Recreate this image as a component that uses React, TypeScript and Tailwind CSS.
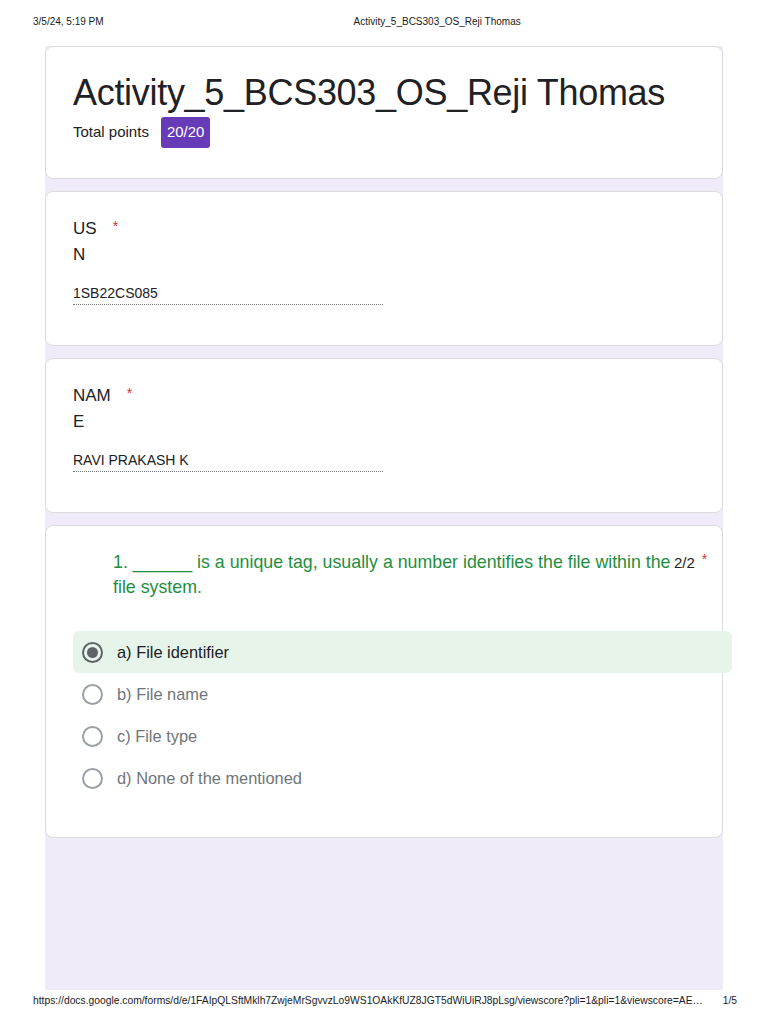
import React from 'react';

const options = [
  { label: 'a) File identifier', selected: true },
  { label: 'b) File name', selected: false },
  { label: 'c) File type', selected: false },
  { label: 'd) None of the mentioned', selected: false },
];

function Radio({ selected }: { selected: boolean }) {
  return (
    <span
      className={
        'flex h-[21px] w-[21px] shrink-0 items-center justify-center rounded-full border-2 ' +
        (selected ? 'border-[#5f6368]' : 'border-[#9aa0a6]')
      }
    >
      {selected && <span className="h-[11px] w-[11px] rounded-full bg-[#5f6368]" />}
    </span>
  );
}

function FieldCard({ first, second, value }: { first: string; second: string; value: string }) {
  return (
    <div className="h-[155px] rounded-lg border border-[#dadce0] bg-white px-[27px] pt-[24px]">
      <div className="flex items-start text-[17px] leading-[26px] text-[#202124]">
        <div>
          <div>{first}</div>
          <div>{second}</div>
        </div>
        <span className="ml-[16px] text-[14px] leading-[20px] text-[#d93025]">*</span>
      </div>
      <div className="mt-[15px] w-[310px] border-b border-dotted border-[#70757a] pb-[1px] text-[14px] leading-[20px] text-[#202124]">
        {value}
      </div>
    </div>
  );
}

export default function App() {
  return (
    <div className="flex min-h-[1024px] flex-col bg-white font-['Liberation_Sans',Arial,sans-serif]">
      <div className="flex h-[46px] items-start pt-[16px] text-[10px] leading-[12px] text-[#202124]">
        <span className="ml-[33px]">3/5/24, 5:19 PM</span>
        <span className="ml-[250px]">Activity_5_BCS303_OS_Reji Thomas</span>
      </div>

      <div className="mx-[45px] flex h-[944px] w-[678px] flex-col gap-[12px] bg-[#f0ebf8]">
        <div className="h-[133px] rounded-lg border border-[#dadce0] bg-white px-[27px] pt-[24px]">
          <h1 className="text-[36px] leading-[44px] tracking-[-0.3px] text-[#202124]">
            Activity_5_BCS303_OS_Reji Thomas
          </h1>
          <div className="mt-[2px] flex items-center text-[15px] text-[#202124]">
            <span>Total points</span>
            <span className="ml-[12px] flex h-[31px] items-center rounded-[3px] bg-[#673ab7] px-[6px] text-white">
              20/20
            </span>
          </div>
        </div>

        <FieldCard first="US" second="N" value="1SB22CS085" />
        <FieldCard first="NAM" second="E" value="RAVI PRAKASH K" />

        <div className="h-[313px] rounded-lg border border-[#dadce0] bg-white pt-[24px]">
          <div className="flex items-start pl-[67px]">
            <p className="w-[561px] text-[17.8px] leading-[25px] text-[#1e8e3e]">
              1. ______ is a unique tag, usually a number identifies the file within the file system.
            </p>
            <span className="mt-[3px] text-[15px] leading-[20px] text-[#202124]">2/2</span>
            <span className="ml-[7px] text-[14px] leading-[18px] text-[#d93025]">*</span>
          </div>

          <div className="mt-[31px] ml-[27px] mr-[-10px] flex flex-col">
            {options.map((o) => (
              <div
                key={o.label}
                className={
                  'flex h-[42px] items-center rounded-md pl-[9px] ' + (o.selected ? 'bg-[#e6f4ea]' : '')
                }
              >
                <Radio selected={o.selected} />
                <span
                  className={
                    'ml-[14px] text-[16.4px] ' + (o.selected ? 'text-[#202124]' : 'text-[#70757a]')
                  }
                >
                  {o.label}
                </span>
              </div>
            ))}
          </div>
        </div>
      </div>

      <div className="flex items-center justify-between pl-[33px] pr-[31px] pt-[5px] text-[10.3px] leading-[12px] text-[#202124]">
        <span>
          https://docs.google.com/forms/d/e/1FAIpQLSftMklh7ZwjeMrSgvvzLo9WS1OAkKfUZ8JGT5dWiUiRJ8pLsg/viewscore?pli=1&amp;pli=1&amp;viewscore=AE…
        </span>
        <span>1/5</span>
      </div>
    </div>
  );
}
